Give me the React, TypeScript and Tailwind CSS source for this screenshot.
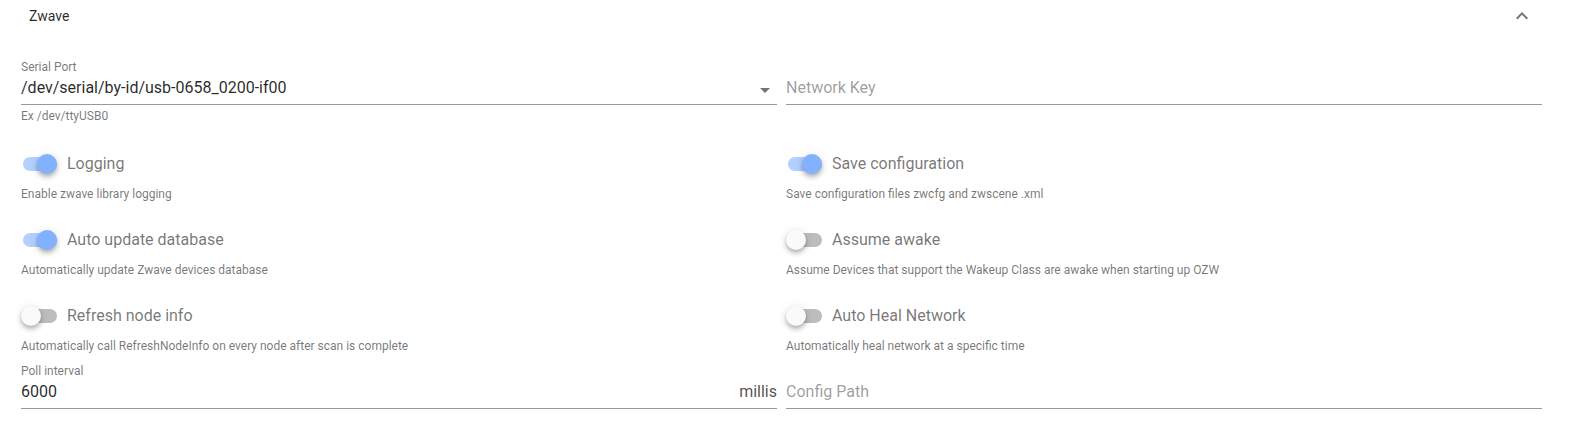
import React, { useState } from 'react';

interface ToggleProps {
  label: string;
  hint: string;
  on: boolean;
  onToggle: () => void;
  className?: string;
}

function Toggle({ label, hint, on, onToggle, className = '' }: ToggleProps) {
  return (
    <div className={className}>
      <div className="flex items-center h-[24px] cursor-pointer" onClick={onToggle}>
        <div className="relative w-[36px] h-[24px] mr-[10px] shrink-0">
          <div
            className={`absolute left-[2px] top-[5px] w-[34px] h-[14px] rounded-full ${
              on ? 'bg-[#82b1ff]/60' : 'bg-[#bdbdbd]'
            }`}
          />
          <div
            className={`absolute top-[2px] w-[20px] h-[20px] rounded-full transition-all shadow-[0_2px_4px_-1px_rgba(0,0,0,0.2),0_4px_5px_0_rgba(0,0,0,0.14),0_1px_10px_0_rgba(0,0,0,0.12)] ${
              on ? 'left-[16px] bg-[#82b1ff]' : 'left-0 bg-[#fafafa]'
            }`}
          />
        </div>
        <span className="text-[16px] leading-[24px] text-black/55">{label}</span>
      </div>
      <div className="mt-[11px] text-[12px] leading-[14px] text-black/55">{hint}</div>
    </div>
  );
}

interface FieldProps {
  label?: string;
  value?: string;
  placeholder?: string;
  hint?: string;
  suffix?: string;
  select?: boolean;
  className?: string;
}

function Field({ label, value, placeholder, hint, suffix, select, className = '' }: FieldProps) {
  return (
    <div className={className}>
      <div className="h-[17px] pt-[1px] text-[12px] leading-[16px] text-black/55">{label}</div>
      <div className="flex items-center h-[30px] pt-[1px] pb-[4px] border-b border-black/40">
        <div
          className={`flex-1 text-[16px] leading-[24px] ${
            value ? 'text-black/85' : 'text-black/40'
          }`}
        >
          {value || placeholder}
        </div>
        {suffix && <span className="text-[16px] leading-[24px] text-black/70">{suffix}</span>}
        {select && (
          <svg viewBox="0 0 24 24" className="w-[24px] h-[24px] translate-y-[2px] fill-black/55">
            <path d="M7 10l5 5 5-5z" />
          </svg>
        )}
      </div>
      {hint && <div className="mt-[4px] text-[12px] leading-[14px] text-black/55">{hint}</div>}
    </div>
  );
}

export default function App() {
  const [logging, setLogging] = useState(true);
  const [saveConfig, setSaveConfig] = useState(true);
  const [autoUpdate, setAutoUpdate] = useState(true);
  const [assumeAwake, setAssumeAwake] = useState(false);
  const [refreshNode, setRefreshNode] = useState(false);
  const [autoHeal, setAutoHeal] = useState(false);

  return (
    <div className="w-[1569px] h-[431px] bg-white font-['Roboto',sans-serif]">
      <div className="flex items-center justify-between h-[32px] pl-[29px] pr-[35px]">
        <span className="text-[14px] text-black/85">Zwave</span>
        <svg viewBox="0 0 24 24" className="w-[24px] h-[24px] fill-black/55">
          <path d="M7.41 15.41L12 10.83l4.59 4.58L18 14l-6-6-6 6z" />
        </svg>
      </div>

      <div className="grid grid-cols-2 gap-x-[9px] pl-[21px] pr-[27px] pt-[26px]">
        <Field
          label="Serial Port"
          value="/dev/serial/by-id/usb-0658_0200-if00"
          hint="Ex /dev/ttyUSB0"
          select
        />
        <Field placeholder="Network Key" />

        <Toggle
          className="mt-[29px]"
          label="Logging"
          hint="Enable zwave library logging"
          on={logging}
          onToggle={() => setLogging(!logging)}
        />
        <Toggle
          className="mt-[29px]"
          label="Save configuration"
          hint="Save configuration files zwcfg and zwscene .xml"
          on={saveConfig}
          onToggle={() => setSaveConfig(!saveConfig)}
        />

        <Toggle
          className="mt-[27px]"
          label="Auto update database"
          hint="Automatically update Zwave devices database"
          on={autoUpdate}
          onToggle={() => setAutoUpdate(!autoUpdate)}
        />
        <Toggle
          className="mt-[27px]"
          label="Assume awake"
          hint="Assume Devices that support the Wakeup Class are awake when starting up OZW"
          on={assumeAwake}
          onToggle={() => setAssumeAwake(!assumeAwake)}
        />

        <Toggle
          className="mt-[27px]"
          label="Refresh node info"
          hint="Automatically call RefreshNodeInfo on every node after scan is complete"
          on={refreshNode}
          onToggle={() => setRefreshNode(!refreshNode)}
        />
        <Toggle
          className="mt-[27px]"
          label="Auto Heal Network"
          hint="Automatically heal network at a specific time"
          on={autoHeal}
          onToggle={() => setAutoHeal(!autoHeal)}
        />

        <Field className="mt-[9px]" label="Poll interval" value="6000" suffix="millis" />
        <Field className="mt-[9px]" placeholder="Config Path" />
      </div>
    </div>
  );
}
